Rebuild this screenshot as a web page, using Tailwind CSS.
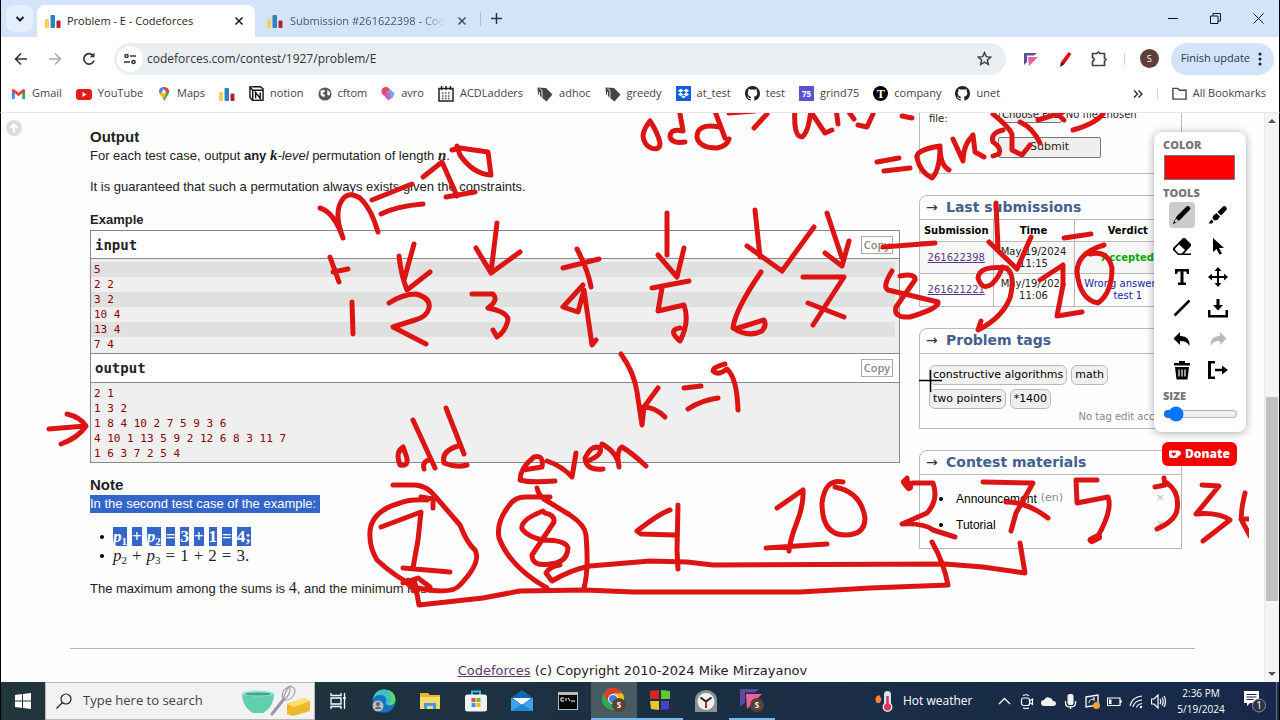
<!DOCTYPE html>
<html lang="en">
<head>
    <meta charset="UTF-8">
    <meta name="viewport" content="width=device-width, initial-scale=1.0">
    <script src="https://cdn.jsdelivr.net/npm/@tailwindcss/browser@4"></script>
    <title>Problem - E - Codeforces</title>
</head>
<body class="flex h-screen flex-col overflow-hidden bg-white font-['Open_Sans',sans-serif] text-[#1f1f1f]">

    <!-- shared icons -->
    <svg class="hidden">
        <symbol id="cf" viewBox="0 0 16 16">
            <rect x="0" y="6" width="4" height="9" rx="1" fill="#f2cf5b"/>
            <rect x="5.5" y="2" width="4.5" height="13" rx="1" fill="#2c83c4"/>
            <rect x="11.5" y="7.5" width="4" height="7.5" rx="1" fill="#b3202a"/>
        </symbol>
        <symbol id="x" viewBox="0 0 10 10">
            <path d="M1.5 1.5l7 7M8.500 1.5l-7 7" stroke="currentColor" stroke-width="1.6" fill="none"/>
        </symbol>
        <symbol id="github" viewBox="0 0 16 16">
            <path fill="#1f2328" d="M8 0C3.580 0 0 3.580 0 8c0 3.540 2.290 6.530 5.470 7.590.4.070.550-.170.550-.380 0-.190-.010-.820-.010-1.490-2.010.370-2.530-.490-2.690-.940-.090-.230-.480-.940-.820-1.130-.280-.150-.680-.520-.010-.530.630-.010 1.080.580 1.230.820.720 1.210 1.870.870 2.330.660.070-.520.280-.870.510-1.070-1.780-.2-3.640-.890-3.640-3.950 0-.870.310-1.590.820-2.150-.080-.2-.360-1.020.080-2.120 0 0 .670-.210 2.200.820.640-.180 1.320-.270 2-.270s1.360.090 2 .270c1.530-1.040 2.200-.820 2.200-.820.440 1.100.160 1.920.080 2.120.510.560.820 1.270.820 2.150 0 3.070-1.870 3.750-3.650 3.950.290.250.540.730.540 1.480 0 1.070-.010 1.930-.010 2.200 0 .210.150.460.550.380A8 8 0 0 0 16 8c0-4.420-3.580-8-8-8z"/>
        </symbol>
        <symbol id="tag" viewBox="0 0 16 16">
            <path fill="#444746" d="M.5 1.500L9 2l6.500 6.500-6 7L4 11 1 8z"/>
            <path d="M2.500 3Q5.500 3 5 8v3.500Q4 14 2.500 11.500V6" fill="none" stroke="#fff" stroke-width=".9"/>
        </symbol>
        <symbol id="kite" viewBox="0 0 16 16">
            <path fill="#5b4fa0" d="M1 2h13l-3 2.500H4V11l-3 3z"/>
            <path fill="#ee5f9b" d="M5 6h10l-9 9z"/>
        </symbol>
    </svg>

    <!-- tabs -->
    <header class="flex h-[37px] shrink-0 border-x border-black bg-[#d3e3fa]">
        <button class="mt-[5px] ml-[5px] flex h-[27px] w-[27px] items-center justify-center rounded-lg bg-[#e6effc]" aria-label="Search tabs">
            <svg class="size-[10px]" viewBox="0 0 10 10" fill="none" stroke="#1f1f1f" stroke-width="2"><path d="M1.500 3L5 6.500 8.500 3"/></svg>
        </button>
        <div class="mt-[5px] ml-1 flex w-[218px] items-center rounded-t-lg bg-white pr-[11px] pl-2">
            <svg class="size-4"><use href="#cf"/></svg>
            <span class="ml-[6px] flex-1 text-[11px]">Problem - E - Codeforces</span>
            <button aria-label="Close tab"><svg class="size-[10px]"><use href="#x"/></svg></button>
        </div>
        <div class="mt-[5px] flex w-[225px] items-center border-r border-transparent pr-3 pl-3 text-[#44505e]">
            <svg class="size-4 shrink-0"><use href="#cf"/></svg>
            <span class="ml-[7px] flex-1 overflow-hidden bg-linear-to-r from-[#44505e] from-85% to-transparent bg-clip-text text-[11px] whitespace-nowrap text-transparent">Submission #261622398 - Codeforces</span>
            <button class="ml-[12px]" aria-label="Close tab"><svg class="size-[10px]"><use href="#x"/></svg></button>
        </div>
        <div class="mt-3 h-[14px] w-px bg-[#a3bfe8]"></div>
        <button class="ml-[10px]" aria-label="New tab">
            <svg class="size-[11px]" viewBox="0 0 11 11" stroke="#2b3440" stroke-width="1.5"><path d="M5.500 0v11M0 5.500h11"/></svg>
        </button>
        <div class="ml-auto flex items-center gap-8 pr-[15px]">
            <button aria-label="Minimize"><svg class="size-[11px]" viewBox="0 0 11 11" stroke="#111"><path d="M1 5.500h10"/></svg></button>
            <button aria-label="Restore"><svg class="size-[11px]" viewBox="0 0 11 11" fill="none" stroke="#111"><path d="M.5 3h7.500v7.500H.5zM3 3V.5h7.500V8H8"/></svg></button>
            <button aria-label="Close"><svg class="size-[11px]" viewBox="0 0 11 11" stroke="#111"><path d="M.5.5l10 10M10.500.5l-10 10"/></svg></button>
        </div>
    </header>

    <!-- address bar -->
    <div class="flex h-[43px] shrink-0 items-center border-x border-black pr-[5px] pl-[13px]">
        <button aria-label="Back"><svg class="size-[14px]" viewBox="0 0 14 14" fill="none" stroke="#333" stroke-width="1.600"><path d="M13 7H2M7 1.500L1.500 7 7 12.500"/></svg></button>
        <button class="ml-5" aria-label="Forward"><svg class="size-[14px]" viewBox="0 0 14 14" fill="none" stroke="#aaa" stroke-width="1.500"><path d="M1 7h11M7 1.500L12.500 7 7 12.500"/></svg></button>
        <button class="ml-5" aria-label="Reload"><svg class="size-[14px]" viewBox="0 0 14 14" fill="none" stroke="#333" stroke-width="1.700"><path d="M12 8.500A5.200 5.200 0 1 1 11 3.500"/><path d="M12.500.5v4.700H7.800z" fill="#333" stroke="none"/></svg></button>
        <div class="ml-[18px] flex h-8 flex-1 items-center rounded-full bg-[#e9eef2] pr-[14px] pl-[3px]">
            <button class="flex size-[26px] items-center justify-center rounded-full bg-white" aria-label="Site information">
                <svg class="size-3" viewBox="0 0 12 12" fill="none" stroke="#333" stroke-width="1.500"><circle cx="2.500" cy="3" r="1.600"/><path d="M6 3h6M0 9h6"/><circle cx="9.500" cy="9" r="1.600"/></svg>
            </button>
            <input class="ml-1 flex-1 bg-transparent text-[12px] text-[#333] outline-none" aria-label="Address" value="codeforces.com/contest/1927/problem/E">
            <button aria-label="Bookmark"><svg class="size-[15px]" viewBox="0 0 24 24" fill="none" stroke="#444" stroke-width="2.400"><path d="M12 2.500l2.900 6.500 7 .7-5.300 4.700 1.500 7L12 17.800l-6.100 3.600 1.500-7L2.100 9.700l7-.7z"/></svg></button>
        </div>
        <button class="ml-[17px]" aria-label="GitLens"><svg class="size-4"><use href="#kite"/></svg></button>
        <button class="ml-[18px]" aria-label="Page Marker">
            <svg class="size-4" viewBox="0 0 16 16"><path d="M11.500 1l3 2-7 10-3.500 2 0-4z" fill="#d9141c"/><path d="M4 11l3.500 2-4.500 3z" fill="#222"/></svg>
        </button>
        <button class="ml-[18px]" aria-label="Extensions">
            <svg class="size-4" viewBox="0 0 16 16" fill="none" stroke="#444" stroke-width="1.700"><path d="M1.500 2.500H6Q7.500-.5 9 2.500h4.500V7q3 1.500 0 3v4.500h-12v-4Q5 8.500 1.500 6.500z"/></svg>
        </button>
        <div class="ml-[17px] h-3 w-px bg-[#c7d3e2]"></div>
        <button class="ml-[15px] flex size-[19px] items-center justify-center rounded-full bg-[#5d4037] text-[9px] text-white">S</button>
        <button class="ml-[12px] flex h-8 items-center rounded-full bg-[#d3e3fa] pr-[12px] pl-[10px] text-[11px] font-medium text-[#26384f]">Finish update
            <svg class="ml-[8px] h-[14px] w-1" viewBox="0 0 4 14" fill="#1f1f1f"><circle cx="2" cy="2" r="1.500"/><circle cx="2" cy="7" r="1.500"/><circle cx="2" cy="12" r="1.500"/></svg>
        </button>
    </div>

    <!-- bookmarks -->
    <nav class="flex h-[33px] shrink-0 items-center gap-[14px] border-x border-b border-x-black border-b-[#e4e6e8] pr-[13px] pb-[5px] pl-[10px] text-[11px] whitespace-nowrap text-[#444] [&>a]:flex [&>a]:items-center [&>a]:gap-[6px]">
        <a href="#"><svg class="size-[15px]" viewBox="0 0 16 16" fill="none"><path d="M2.500 14V4" stroke="#4285f4" stroke-width="3"/><path d="M13.500 14V4" stroke="#34a853" stroke-width="3"/><path d="M1.500 4l6.500 5 6.500-5" stroke="#ea4335" stroke-width="3"/></svg>Gmail</a>
        <a href="#"><svg class="size-4" viewBox="0 0 16 16"><rect y="3" width="16" height="11" rx="3" fill="#e21b1b"/><path d="M6.500 6v5l4-2.500z" fill="#fff"/></svg>YouTube</a>
        <a href="#"><svg class="size-[14px]" viewBox="0 0 16 16"><path d="M3 8C1 3 4 0 8 0l-1 5z" fill="#4285f4"/><path d="M8 0c3 0 6 2 6 5.500L8 8z" fill="#ea4335"/><path d="M14 5c0 4-4 5-5 11l-2-2L11 6z" fill="#34a853"/><path d="M3 8l3-3 4 3-3 6C6 11 4 10 3 8z" fill="#fbbc04"/><circle cx="8" cy="5.500" r="2" fill="#fff"/></svg>Maps</a>
        <a href="#" aria-label="Codeforces"><svg class="size-4"><use href="#cf"/></svg></a>
        <a href="#"><svg class="size-[15px]" viewBox="0 0 16 16" fill="#fff" stroke="#111" stroke-width="1.500"><path d="M1 1l11-.3 3 2.300v12l-11 .5-3-3z"/><path d="M1 1l3 3.500h11M4 4.500v11" /><path d="M7 13V7l5 6V7" fill="none"/></svg>notion</a>
        <a href="#"><svg class="size-[14px]" viewBox="0 0 16 16"><circle cx="8" cy="8" r="7.500" fill="#55585c"/><path d="M3 4l4-1 1 2-3 2 3 2-1 3-4-3zM10 3l4 3-1 4-3-2 1-2z" fill="#fff"/></svg>cftom</a>
        <a href="#"><svg class="size-[14px]" viewBox="0 0 16 16"><circle cx="5.500" cy="5" r="5" fill="#e9485d"/><path d="M6 5l5-2 4.500 4-2 5-4.500 3-3-4z" fill="#7aa2f2"/><path d="M3 9l7-3 1 5-3 4.500z" fill="#c765bd"/></svg>avro</a>
        <a href="#"><svg class="size-4" viewBox="0 0 16 16" fill="none" stroke="#1f2328" stroke-width="1.500"><path d="M1 2.500h14v12.500H1zM3.500 0v4M8 0v4M12.500 0v4"/><path d="M4 7h8M4 10h8M4 12.500h8" stroke="#36537c" stroke-dasharray="1.500 1.500"/></svg>ACDLadders</a>
        <a href="#"><svg class="size-4"><use href="#tag"/></svg>adhoc</a>
        <a href="#"><svg class="size-4"><use href="#tag"/></svg>greedy</a>
        <a href="#"><svg class="size-[15px]" viewBox="0 0 16 16"><path fill="#0f5fe0" d="M0 0h16v16H0z"/><path fill="#fff" d="M5 3l3 2-3 2-3-2zM11 3l3 2-3 2-3-2zM5 7l3 2-3 2-3-2zM11 7l3 2-3 2-3-2zM8 10l2.500 1.500L8 13l-2.500-1.500z"/></svg>at_test</a>
        <a href="#"><svg class="size-[15px]"><use href="#github"/></svg>test</a>
        <a href="#"><span class="flex size-[15px] items-center justify-center bg-[#5a52d0] text-[8px] font-bold text-white">75</span>grind75</a>
        <a href="#"><span class="flex size-[15px] items-center justify-center rounded-full bg-black font-['Liberation_Serif',serif] text-[12px] font-bold text-white">T</span>company</a>
        <a href="#"><svg class="size-[15px]"><use href="#github"/></svg>unet</a>
        <button class="ml-auto" aria-label="More bookmarks"><svg class="size-[10px]" viewBox="0 0 10 10" fill="none" stroke="#333" stroke-width="1.500"><path d="M1 1.500L4.500 5 1 8.500M5.500 1.500L9 5 5.500 8.500"/></svg></button>
        <div class="h-3 w-px bg-[#c7d3e2]"></div>
        <a href="#"><svg class="size-[15px]" viewBox="0 0 16 16" fill="none" stroke="#444" stroke-width="1.500"><path d="M1 2.500h5l2 2h7v9.500H1z"/></svg>All Bookmarks</a>
    </nav>

    <!-- page -->
    <main class="relative flex min-h-0 flex-1 border-x border-black bg-[#fefefe]">
        <div class="min-w-0 flex-1 overflow-hidden">
            <div class="mx-auto w-[1125px]">
                <div class="flex h-[536px] items-start gap-[19px] border-b border-[#b9b9b9] pr-[13px] pl-5">

                    <article class="flex-1 pt-[14px] font-['Liberation_Sans',sans-serif] text-[13px] leading-[18px] text-[#222]">
                        <h2 class="text-[15px] leading-5 font-bold">Output</h2>
                        <p>For each test case, output <b>any</b> <i class="font-['Liberation_Serif',serif] text-[15px] leading-none font-bold">k</i><i>-level</i> permutation of length <i class="font-['Liberation_Serif',serif] text-[15px] leading-none font-bold">n</i>.</p>
                        <p class="mt-[13px]">It is guaranteed that such a permutation always exists given the constraints.</p>
                        <h3 class="mt-[14px] leading-5 font-bold">Example</h3>

                        <section class="border border-[#888] font-['DejaVu_Sans_Mono',monospace]">
                            <div class="flex h-7 items-center justify-between border-b border-[#888] bg-white pr-[6px] pl-1">
                                <h4 class="text-[14px] font-bold">input</h4>
                                <button class="h-[18px] w-8 border border-[#aaa] font-['Open_Sans',sans-serif] text-[11px] leading-4 font-semibold text-[#888]">Copy</button>
                            </div>
                            <div class="bg-[#efefef] pt-[3px] pr-1 pb-px text-[11px] leading-[15px] text-[#880000] [&>p]:pl-[3px] [&>p:nth-child(odd)]:bg-[#e0e0e0]">
                                <p>5</p>
                                <p>2 2</p>
                                <p>3 2</p>
                                <p>10 4</p>
                                <p>13 4</p>
                                <p>7 4</p>
                            </div>
                            <div class="flex h-[30px] items-center justify-between border-y border-[#888] bg-white pr-[6px] pl-1">
                                <h4 class="text-[14px] font-bold">output</h4>
                                <button class="h-[18px] w-8 border border-[#aaa] font-['Open_Sans',sans-serif] text-[11px] leading-4 font-semibold text-[#888]">Copy</button>
                            </div>
                            <pre class="bg-[#efefef] pt-[3px] pb-px pl-[3px] font-['DejaVu_Sans_Mono',monospace] text-[11px] leading-[15px] text-[#880000]">2 1
1 3 2
1 8 4 10 2 7 5 9 3 6
4 10 1 13 5 9 2 12 6 8 3 11 7
1 6 3 7 2 5 4</pre>
                        </section>

                        <h2 class="mt-3 text-[15px] leading-5 font-bold">Note</h2>
                        <p><span class="inline-block bg-[#3465c8] pr-[4px] text-white">In the second test case of the example:</span></p>
                        <ul class="mt-[14px] font-['Liberation_Serif',serif] text-[17px] leading-[19px] font-semibold text-[#222] [&>li]:flex [&>li]:items-center [&>li]:pl-[10px]">
                            <li><span class="mr-[9px] size-1 rounded-full bg-black"></span>
                                <span class="flex gap-[5px] text-white [&>span]:bg-[#3465c8]"><span><i>p</i><sub class="text-[11px]">1</sub></span><span>+</span><span><i>p</i><sub class="text-[11px]">2</sub></span><span>=</span><span>3</span><span>+</span><span>1</span><span>=</span><span>4;</span></span>
                            </li>
                            <li><span class="mr-[9px] size-1 rounded-full bg-black"></span>
                                <span class="flex gap-[5px] font-normal"><span><i>p</i><sub class="text-[11px]">2</sub></span><span>+</span><span><i>p</i><sub class="text-[11px]">3</sub></span><span>=</span><span>1</span><span>+</span><span>2</span><span>=</span><span>3.</span></span>
                            </li>
                        </ul>
                        <p class="mt-[15px]">The maximum among the sums is <span class="font-['Liberation_Serif',serif] text-[16px] leading-none">4</span>, and the minimum is <span class="font-['Liberation_Serif',serif] text-[16px] leading-none">3</span>.</p>
                    </article>

                    <aside class="flex w-[263px] flex-col gap-[21px] font-['DejaVu_Sans',sans-serif] text-[11px] text-[#222]">
                        <form class="flex h-[61px] flex-col border border-t-0 border-[#b9b9b9]">
                            <div class="-mt-[18px] flex items-end gap-5 pl-[9px] text-[10px]">
                                <label for="src" class="w-[50px] leading-4">Choose<br>file:</label>
                                <input id="src" type="file" class="mb-1 w-[160px] font-['DejaVu_Sans',sans-serif] text-[10px] leading-4 file:mr-1 file:rounded-xs file:border file:border-[#767676] file:bg-[#efefef] file:px-[2px] file:leading-[14px]">
                            </div>
                            <button type="button" class="mt-auto mb-[15px] ml-[78px] h-[21px] w-[103px] shrink-0 rounded-xs border border-[#767676] bg-[#efefef]">Submit</button>
                        </form>

                        <section class="rounded-tl-lg border border-[#b9b9b9]">
                            <h3 class="flex h-[23px] items-center gap-1 pl-[6px] text-[14px] font-bold text-[#44608f]"><span class="w-4 font-normal text-[#333]">→</span>Last submissions</h3>
                            <table class="w-full table-fixed text-center text-[10px] leading-3 [&_td]:border-t [&_td]:border-[#b9b9b9] [&_th]:border-t [&_th]:border-[#b9b9b9]">
                                <tr class="h-[22px] text-black"><th class="w-[73px]">Submission</th><th class="w-[81px] border-x">Time</th><th>Verdict</th></tr>
                                <tr class="h-8 bg-[#f6f6f6]"><td><a href="#" class="text-[#5b3a8c] underline">261622398</a></td><td class="border-x">May/19/2024 11:15</td><td class="font-bold text-[#0a0]">Accepted</td></tr>
                                <tr class="h-8"><td><a href="#" class="text-[#5b3a8c] underline">261621221</a></td><td class="border-x">May/19/2024 11:06</td><td class="text-[#1a1aa6]">Wrong answer on test 1</td></tr>
                            </table>
                        </section>

                        <section class="h-[101px] rounded-tl-lg border border-[#b9b9b9]">
                            <h3 class="flex h-[25px] items-center gap-1 border-b border-[#b9b9b9] pl-[6px] text-[14px] font-bold text-[#44608f]"><span class="w-4 font-normal text-[#333]">→</span>Problem tags</h3>
                            <div class="flex flex-wrap gap-1 pt-[11px] pr-8 pl-[9px] text-black [&>span]:rounded-md [&>span]:border [&>span]:border-[#b9b9b9] [&>span]:bg-[#f0f0f0] [&>span]:px-[3px] [&>span]:py-px [&>span]:leading-4">
                                <span>constructive algorithms</span><span>math</span><span>two pointers</span><span>*1400</span>
                            </div>
                            <p class="pr-[10px] text-right text-[10px] leading-4 text-[#888]">No tag edit access</p>
                        </section>

                        <section class="h-[99px] rounded-tl-lg border border-[#b9b9b9]">
                            <h3 class="flex h-[24px] items-center gap-1 border-b border-[#b9b9b9] pl-[6px] text-[14px] font-bold text-[#44608f]"><span class="w-4 font-normal text-[#333]">→</span>Contest materials</h3>
                            <ul class="pt-[11px] pl-[19px] [&>li]:flex [&>li]:h-[26px] [&>li]:items-center">
                                <li><span class="mr-[13px] size-1 rounded-full bg-black"></span><a href="#" class="font-['Liberation_Sans',sans-serif] text-[12px] text-black">Announcement</a><span class="ml-1 text-[#888]">(en)</span><span class="mr-4 ml-auto text-[#bbb]">×</span></li>
                                <li><span class="mr-[13px] size-1 rounded-full bg-black"></span><a href="#" class="font-['Liberation_Sans',sans-serif] text-[12px] text-black">Tutorial</a><span class="mr-4 ml-auto text-[#bbb]">×</span></li>
                            </ul>
                        </section>
                    </aside>
                </div>
                <footer class="pt-[13px] text-center font-['DejaVu_Sans',sans-serif] text-[13px] leading-[17px] text-[#222]">
                    <p><a href="#" class="text-[#5b3a6c] underline">Codeforces</a> (c) Copyright 2010-2024 Mike Mirzayanov</p>
                    <p>The only programming contests Web 2.0 platform</p>
                </footer>
            </div>
        </div>

        <!-- scrollbar -->
        <div class="flex w-[15px] flex-col items-center border-l border-[#e8e8e8] bg-[#f4f4f4] py-[6px]">
            <div class="border-x-4 border-b-4 border-transparent border-b-[#555]"></div>
            <div class="grow-[262]"></div>
            <div class="h-[204px] w-[12px] bg-[#c1c1c1]"></div>
            <div class="grow-[68]"></div>
            <div class="border-x-4 border-t-4 border-transparent border-t-[#555]"></div>
        </div>

        <svg class="absolute top-[7px] left-[5px] size-4" viewBox="0 0 16 16"><circle cx="8" cy="8" r="8" fill="#dcdcdc"/><path d="M8 13V5M4.500 8L8 4.500 11.500 8" fill="none" stroke="#fff" stroke-width="2"/></svg>

        <!-- pen strokes drawn over the page -->
        <svg class="pointer-events-none absolute inset-y-0 left-0 h-full w-[1248px]" fill="none" stroke="#dc1414" stroke-width="5" stroke-linecap="round" stroke-linejoin="round">
            <g transform="translate(-1 -113)">
                <!-- odd -> ans -->
                <path d="M650 121Q643 130 643 136 644 145 651 148 660 151 660 143 658 133 650 121M679 108L683 131Q670 128 670 137 672 144 685 142M713 106L725 138M719 127Q697 123 697 137 699 148 717 148 727 146 729 139"/>
                <path d="M729 113L755 111M767 114L754 128M795 108Q793 137 802 137 809 132 811 108M811 112L825 133 832 130M836 108L838 124M846 108L854 119M858 125L867 127 873 114M902 116L912 118"/>
                <!-- = ans -->
                <path d="M877 162L899 158M884 171L910 168M940 146Q915 150 917 158 920 172 932 178 940 170 940 147 940 165 949 170M953 139L963 161Q963 145 973 135L975 152 984 157M1003 130Q990 133 993 142 1002 148 999 154L993 156"/>
                <path d="M993 114Q1008 126 1012 134L1012 150 1022 155 1030 145M1020 122Q1033 128 1040 143M1038 120L1063 112M1055 112L1064 120M1073 130Q1095 124 1103 114"/>
                <!-- n = 10 -->
                <path d="M320 208Q334 212 343 238 334 214 341 202 347 190 360 198 371 208 378 232M372 200L412 184M381 214Q397 206 423 204M423 177L442 162 457 196M446 197L475 192M452 150L460 148 488 152 491 175Q473 174 460 155L457 146"/>
                <!-- marks over the digits -->
                <path d="M330 257L339 282M333 272L348 269M414 244L404 280M399 256Q401 275 407 290L430 272M497 223L491 272M476 248L491 273 520 252M577 249Q588 270 591 287M563 268L599 259"/>
                <path d="M667 213V255M658 255L677 277 684 248M755 210L760 257M747 246L782 271 814 227M827 213L842 258M825 253L842 266 849 241M883 247L935 243M996 203L998 248M989 242L1017 269 1031 237M1064 238L1091 234"/>
                <!-- 1 to 10 -->
                <path d="M352 302L353 334M389 303Q403 294 416 294 431 298 429 308 427 317 415 320L393 327 426 344M472 294H493Q499 300 488 308 508 312 508 320 505 332 497 337L493 330M583 285L563 307 578 312 584 290 592 345 596 340"/>
                <path d="M652 288L689 281M662 288L658 311 684 305Q690 322 680 341 667 330 680 328M761 272Q735 310 733 328 748 338 762 331 767 325 764 320L735 329M803 277H844L813 325M808 303L844 317"/>
                <path d="M892 271Q882 287 888 290L938 302Q940 308 910 317 893 318 896 307L915 280Q916 273 900 276M1007 268Q979 265 978 278 982 291 992 284 1000 276 1002 267 1017 269 1010 298 1002 318 978 330L981 321M1040 280L1063 265 1063 285 1057 316 1082 312M1104 245Q1077 253 1077 272 1080 300 1098 303 1112 293 1112 268 1108 250 1090 254"/>
                <!-- k = 9 -->
                <path d="M621 354Q634 372 637 392L642 425 644 407 658 388M643 407Q655 407 665 417M684 388L701 386M688 409Q702 400 718 398M725 364Q713 367 713 371 718 376 727 369 737 378 738 410"/>
                <!-- odd / even -->
                <path d="M403 447Q395 452 400 465 410 467 406 455L403 447M413 420L435 468M430 460Q422 461 424 469M446 408L464 454M458 446Q441 451 444 463 456 468 467 465"/>
                <path d="M523 470L542 467Q544 454 534 457 520 468 520 480 530 483 555 481M547 461Q562 466 572 477L576 453M590 460Q603 454 600 448 592 444 585 458 586 471 603 469M602 444Q618 453 619 467 616 450 622 447 632 453 646 466M49 429L85 426M67 414Q80 417 86 426 78 438 61 444"/>
                <!-- circled 1 and 8 -->
                <path d="M393 485H415Q427 486 434 495L460 525Q467 543 475 550 482 562 460 585 452 595 418 588 395 577 377 560 370 548 370 537 368 512 400 503 410 499 427 500M421 497L433 499V508M381 527L421 512 418 540 413 568M403 568L450 572"/>
                <path d="M537 488Q539 497 547 501L570 515Q585 525 586 535 589 570 584 588M550 497H525Q514 497 508 507 496 523 499 538 510 567 547 588M543 511Q520 520 522 529 528 537 543 540 566 540 568 548 567 563 550 564 532 567 532 555L554 522Q555 515 545 513"/>
                <!-- 4 10 2 7 5 9 3 6 -->
                <path d="M670 510Q660 513 637 531L641 534 675 535M678 505L677 550 678 569M777 508L803 490Q804 504 797 522 790 540 789 551M766 548L827 544M843 482Q825 478 822 503 822 535 845 535 865 535 865 518 861 492 835 487M907 478L908 487 912 483 933 483Q939 500 927 513L902 524Q925 523 933 530L955 537"/>
                <path d="M983 482L1033 483 1016 513 1011 531M1006 502Q1027 502 1048 518M1097 480H1076L1077 503 1108 497Q1113 510 1097 538L1090 540M1164 478L1165 485 1155 487M1167 483Q1180 492 1177 510 1175 521 1157 529M1202 485L1219 486 1196 514Q1218 512 1230 520L1203 541M1245 493Q1239 518 1243 523L1250 536M1241 519H1250"/>
                <!-- brackets -->
                <path d="M560 565Q550 566 546 573L552 581Q570 570 590 566L650 561 687 562 713 565 945 564 983 567 1025 573 1020 543M932 542Q944 563 948 585L870 588 800 592H633L585 590 520 591 483 598 419 605 415 583M403 583L418 578 430 587"/>
                <path d="M905 482L909 487M1092 540L1098 537M408 582L416 590" stroke-width="8"/>
                <path d="M930.500 370v22M919 380.500h23" stroke="#000" stroke-width="1.500" stroke-linecap="butt"/>
            </g>
        </svg>

        <!-- drawing palette -->
        <div class="absolute top-[19px] right-[33px] w-[92px]">
            <div class="h-[300px] rounded-lg bg-white px-[9px] pt-[5px] text-[11px] leading-4 font-extrabold text-[#777] shadow-[0_1px_8px_rgba(0,0,0,0.35)]">
                <label for="color" class="block">COLOR</label>
                <input id="color" type="color" value="#ff0000" class="mt-[2px] ml-px block h-[25px] w-[71px] [&::-webkit-color-swatch]:rounded-none [&::-webkit-color-swatch]:border-[#777] [&::-webkit-color-swatch-wrapper]:p-0">
                <p class="mt-[5px]">TOOLS</p>
                <div class="mt-px grid grid-cols-[26px_26px] gap-x-[10px] gap-y-[5px] pl-[6px] text-black [&>button]:flex [&>button]:size-[26px] [&>button]:items-center [&>button]:justify-center [&>button]:rounded-sm [&_svg]:size-5">
                    <button class="bg-[#ccc]" aria-label="Pencil"><svg viewBox="0 0 20 20"><path d="M14.500 1.500q1.500-1.200 3 .3t.3 3L8 15l-5.500 3.500L1 19l1-3L5 11z"/><path d="M4 13.500l3 2.500-3.500 1.500-1-1z" fill="#ccc"/></svg></button>
                    <button aria-label="Highlighter"><svg viewBox="0 0 20 20"><path d="M15 1.500q1.500-1 3 .5t.5 3L13 10.500 9.500 7zM8.500 8l3.500 3.500-2.500 3.500-3 .5L4.500 13.500 5 11zM3.500 14.500l2 2-1.500 2H.5z"/></svg></button>
                    <button aria-label="Eraser"><svg viewBox="0 0 20 20"><path d="M1 12L11 2h2l6 6v2l-7 7.500h7V19H6l-5-5z"/><path d="M7 8.500l6 5.500-3.500 3.500h-3L3 13.500v-1z" fill="#fff"/></svg></button>
                    <button aria-label="Pointer"><svg viewBox="0 0 20 20"><path d="M5 2l11 10h-5l3 5.500-2.500 1.300L8.500 13 5 16z"/></svg></button>
                    <button aria-label="Text"><svg viewBox="0 0 20 20"><path d="M3 2h14v5h-2l-1-2.500h-2.500V15.500H14V18H6v-2.500h2.500v-11H6L5 7H3z"/></svg></button>
                    <button aria-label="Move"><svg viewBox="0 0 20 20" ><path d="M10 0l3.500 4H11v5h5V6.500l4 3.500-4 3.500V11h-5v5h2.500L10 20l-3.500-4H9v-5H4v2.500L0 10l4-3.500V9h5V4H6.500z"/></svg></button>
                    <button aria-label="Line"><svg viewBox="0 0 20 20"><path d="M2.500 17.500l15-15" stroke="#000" stroke-width="2.500"/></svg></button>
                    <button aria-label="Save"><svg viewBox="0 0 20 20"><path d="M8.500 1h3v6H15l-5 5.500L5 7h3.500zM0 12h2.500v5h15v-5H20v7.500H0z"/></svg></button>
                    <button aria-label="Undo"><svg viewBox="0 0 20 20"><path d="M8 3v4q10-.5 9.500 10Q15 12 8 12v4L1.500 9.500z"/></svg></button>
                    <button class="text-[#bbb]" aria-label="Redo" disabled><svg viewBox="0 0 20 20" fill="currentColor"><path d="M12 3v4Q2 6.500 2.500 17 5 12 12 12v4l6.500-6.500z"/></svg></button>
                    <button aria-label="Clear"><svg viewBox="0 0 20 20"><path d="M7 1h6v2h5v2.500H2V3h5zM3 7h14l-1.500 12.500h-11z"/><path d="M7 9.500v7M10 9.500v7M13 9.500v7" stroke="#fff" stroke-width="1.200"/></svg></button>
                    <button aria-label="Exit"><svg viewBox="0 0 20 20"><path d="M0 1h7v2.500H3v13h4V19H0zM7 8.800h7V5.500L20 10l-6 4.500v-3.300H7z"/></svg></button>
                </div>
                <label for="size" class="mt-[5px] block">SIZE</label>
                <input id="size" type="range" value="9" class="mt-[3px] block h-[14px] w-[75px] accent-[#0075ff]">
            </div>
            <button class="mt-[10px] ml-2 flex h-6 w-[75px] items-center justify-center gap-1 rounded-md bg-[#f80000] text-[12px] font-extrabold text-white">
                <svg class="size-3" viewBox="0 0 12 12"><path d="M0 2.500h9.500q2.500.5 2.500 2.700T9.500 8Q9 10 7 10H2Q0 10 0 8z" fill="#fff"/><path d="M4.700 8.200L2.500 5.900q0-2 2.200-1 2.300-1 2.300 1z" fill="#f80000"/></svg>Donate
            </button>
        </div>
    </main>

    <!-- taskbar -->
    <footer class="flex h-[38px] shrink-0 items-center border-x border-black bg-linear-to-r from-[#21363b] to-[#17284a] text-white">
        <button class="flex w-11 justify-center" aria-label="Start">
            <svg class="size-4" viewBox="0 0 16 16" fill="#fff"><path d="M0 2l7-1v6.500H0zM8 1l8-1v7.500H8zM0 8.500h7V15l-7-1zM8 8.500h8V16l-8-1z"/></svg>
        </button>
        <label class="flex h-full w-[270px] items-center border border-[#b8b8b8] bg-[#f2f2f2] pr-[3px] pl-[10px]">
            <svg class="size-4 shrink-0" viewBox="0 0 16 16" fill="none" stroke="#222" stroke-width="1.200"><circle cx="10" cy="6" r="5"/><path d="M6.500 9.500L.5 15.500"/></svg>
            <input class="ml-[11px] min-w-0 flex-1 bg-transparent text-[13px] outline-none placeholder:text-[#444]" placeholder="Type here to search">
            <svg class="h-8 w-[70px]" viewBox="0 0 70 32">
                <path d="M1 8h32q0 12-8 18l-3 2H12l-3-2Q1 20 1 8z" fill="#5fcfae"/><ellipse cx="17" cy="8.500" rx="16" ry="3" fill="#9be8d0"/><ellipse cx="17" cy="9" rx="13" ry="1.600" fill="#3fa98b"/>
                <path d="M31 29L43 14" stroke="#9b93a8" stroke-width="3" stroke-linecap="round"/>
                <path d="M42 15Q39 5 49 1q8 2 3 10-4 5-10 4zM42 15Q44 6 49 1M42 15q8-4 7-14" fill="none" stroke="#a7a1b4" stroke-width="1.200"/>
                <path d="M46 19l17-6 6 3v10l-17 5-6-2z" fill="#efb82c"/><path d="M46 19l17-6 6 3-16 6z" fill="#ffdf70"/>
            </svg>
        </label>
        <div class="flex h-full [&>button]:flex [&>button]:h-full [&>button]:w-[46px] [&>button]:items-center [&>button]:justify-center">
            <button aria-label="Task view"><svg class="size-4" viewBox="0 0 16 16" fill="none" stroke="#fff" stroke-width="1.300"><path d="M1 0v2.500h10V0M1 5h10v6H1zM1 16v-2.500h10V16M14.500 0v16M13 5h3"/></svg></button>
            <button aria-label="Edge"><svg class="size-6" viewBox="0 0 24 24"><circle cx="12" cy="12" r="11.500" fill="#1574c4"/><path d="M1 10Q3 0 13 .5 23 2 23.500 11q-1 6-8 5-3-1-1-4 0-6-6-6-5 0-7.500 4z" fill="#3fc3c0"/><path d="M14 .6q9 1.400 9.500 10.400-1 6-8 5 5-2 4-8-1-5-5.500-7.400z" fill="#64d95c"/><circle cx="6" cy="17" r="5.500" fill="#b9bdc1"/><circle cx="6" cy="15" r="2" fill="#60656b"/><path d="M2.500 20q3.500-5 7 0z" fill="#60656b"/></svg></button>
            <button aria-label="File Explorer"><svg class="size-5" viewBox="0 0 20 20"><path d="M0 2h8l2 2h10v14H0z" fill="#e9b230"/><path d="M0 6h20v12H0z" fill="#fbd968"/><path d="M4 18v-6h12v6h-3v-3H7v3z" fill="#3e9fe0"/></svg></button>
            <button aria-label="Microsoft Store"><svg class="size-[22px]" viewBox="0 0 22 22"><path d="M7 5V1.500h8V5" fill="none" stroke="#35b8e8" stroke-width="2"/><rect y="4.500" width="22" height="17" rx="2.500" fill="#f2f2f2"/><path d="M6.500 8H10.500v4H6.500z" fill="#e8502c"/><path d="M11.500 8h4v4h-4z" fill="#7db82c"/><path d="M6.500 13h4v4h-4z" fill="#2c9fe0"/><path d="M11.500 13h4v4h-4z" fill="#f5b61b"/></svg></button>
            <button aria-label="Mail"><svg class="size-[22px]" viewBox="0 0 22 22"><path d="M0 8L11 0l11 8v13H0z" fill="#1266ad"/><path d="M1.500 8h19L11 15z" fill="#f4f8fb"/><path d="M0 8l11 7 11-7v13H0z" fill="#3aa7ec"/><path d="M0 21l11-7 11 7z" fill="#2289d6"/></svg></button>
            <button aria-label="Command Prompt"><svg class="h-[18px] w-5" viewBox="0 0 20 18"><path d="M0 0h20v18H0z" fill="#b9bcbe"/><path d="M1 3h18v14H1z" fill="#050505"/><path d="M3 6h3M3 6v3h3M8 6v3M10 6l2 3M13 9h4" stroke="#fff" fill="none"/></svg></button>
            <button class="border-b-2 border-[#76b9ed] bg-[#485b62]" aria-label="Chrome"><svg class="size-6" viewBox="0 0 24 24"><circle cx="11" cy="11" r="11" fill="#2da94f"/><path d="M1.500 5.500A11 11 0 0 1 20.500 5.500H11L6 13.500z" fill="#e33b2e"/><path d="M20.500 5.500A11 11 0 0 1 10.500 22l5-8.500-4.500-8z" fill="#fbc116"/><circle cx="11" cy="11" r="5" fill="#fff"/><circle cx="11" cy="11" r="4" fill="#3b7de8"/><circle cx="17" cy="17" r="7" fill="#5d4037"/><text x="17" y="20" text-anchor="middle" font-size="8" font-weight="700" fill="#fff">S</text></svg></button>
            <button class="border-b-2 border-[#76b9ed]" aria-label="Code::Blocks"><svg class="size-5" viewBox="0 0 20 20"><path d="M0 1l9-1v9L0 9z" fill="#d52525"/><path d="M11 0l9 1v8h-9z" fill="#5cc832"/><path d="M0 11h9v9l-8-1z" fill="#e4c92c"/><path d="M11 11h8v8l-8 1z" fill="#4b42c2"/></svg></button>
            <button aria-label="Clock"><svg class="size-[22px]" viewBox="0 0 22 22"><path d="M0 22V10A11 10 0 0 1 22 10v12z" fill="#8a9196"/><circle cx="11" cy="11.500" r="8.500" fill="#f2f2f2"/><path d="M5.500 7.500l5.500 4 5.500-4M11 11.500V18" fill="none" stroke="#222" stroke-width="2"/><path d="M11 12v5.500" stroke="#d33" stroke-width="1.500"/></svg></button>
            <button class="border-b-2 border-[#76b9ed]" aria-label="GitLens"><svg class="size-6" viewBox="0 0 24 24"><path d="M0 1h19l-4 3.500H5v10L0 19z" fill="#5c4b9c"/><path d="M6 6h16L7 21z" fill="#ee5f9b"/><circle cx="17" cy="17" r="7" fill="#5d4037"/><text x="17" y="20" text-anchor="middle" font-size="8" font-weight="700" fill="#fff">S</text></svg></button>
        </div>
        <div class="ml-auto flex h-full items-center">
            <svg class="h-[21px] w-[18px]" viewBox="0 0 18 21"><path d="M1 11q-2-5 3-7 3 3 2 6-2 4-5 1z" fill="#f08334"/><rect x="9" y="0" width="7" height="17" rx="3.500" fill="#d7e2f0"/><circle cx="12.500" cy="16" r="5" fill="#d7e2f0"/><circle cx="12.500" cy="16" r="3.500" fill="#e0345a"/><path d="M12.500 5v10" stroke="#e0345a" stroke-width="2.500"/></svg>
            <span class="ml-[10px] w-[72px] text-[12px] whitespace-nowrap">Hot weather</span>
            <div class="ml-[22px] flex items-center gap-[7px] [&>svg]:size-[15px]" >
                <svg viewBox="0 0 15 15" fill="none" stroke="#fff" stroke-width="1.300"><path d="M2 10l5.500-5.500L13 10"/></svg>
                <svg viewBox="0 0 15 15" fill="none" stroke="#fff" stroke-width="1.200"><rect x="2.500" y="4" width="8" height="7.500" rx="2"/><path d="M10.500 7l3-2v5.500l-3-2M4 1.500Q7 0 10 1.500M4 14q3 1 6 0"/></svg>
                <svg viewBox="0 0 15 15" fill="#f1f1f1"><path d="M3 12Q0 12 0 9t3-3q2-4 6-2 2 0 3 3 3 0 3 2.500T12 12z"/></svg>
                <svg viewBox="0 0 15 15" fill="#f1f1f1"><rect x="4.500" y="0" width="6" height="11" rx="2"/><path d="M2.500 7v2q0 4 5 4t5-4V7M7.500 12v3" fill="none" stroke="#fff" stroke-width="1.300"/></svg>
                <svg viewBox="0 0 15 15"><path d="M1 3l12-2v10L1 13z" fill="none" stroke="#fff" stroke-width="1.300"/><path d="M4 9q0-4 5-4M9 3v4" stroke="#fff" fill="none"/><circle cx="11.500" cy="11.500" r="3.500" fill="#f0a22e"/></svg>
                <svg viewBox="0 0 15 15"><path d="M.5 4h12.500v7.500H.5zM14 6v3" fill="none" stroke="#fff" stroke-width="1.200"/><path d="M2 5.500h2.500V10H2z" fill="#fff"/></svg>
                <svg viewBox="0 0 15 15" fill="none" stroke="#fff" stroke-width="1.200"><path d="M1 12Q3 3 13 2M4 13q1-6 9-7M7.500 13.500q.5-3 5.500-4"/><circle cx="12" cy="13" r="1.200" fill="#fff" stroke="none"/></svg>
                <svg viewBox="0 0 15 15" fill="none" stroke="#fff" stroke-width="1.200"><path d="M.5 5H3l4-4v13L3 10H.5zM9 5q1.500 2.500 0 5M11 3.500q2.500 4 0 8M13 2q3 5.500 0 11"/></svg>
            </div>
            <div class="ml-2 w-[54px] text-center text-[10px] leading-4"><p>2:36 PM</p><p>5/19/2024</p></div>
            <button class="mr-[10px] ml-[16px]" aria-label="Notifications">
                <svg class="h-[23px] w-[22px]" viewBox="0 0 22 23"><path d="M0 1h15v12H6l-3 3v-3H0z" fill="#fff"/><path d="M2.500 4.500h10M2.500 7h10M2.500 9.500h7" stroke="#17284a"/><circle cx="15" cy="15.500" r="6.500" fill="#2c3444" stroke="#8a8f98"/><text x="15" y="19" text-anchor="middle" font-size="10" fill="#fff">1</text></svg>
            </button>
        </div>
        <div class="mr-[2px] h-full w-px bg-[#6c7686]"></div>
    </footer>
</body>
</html>
